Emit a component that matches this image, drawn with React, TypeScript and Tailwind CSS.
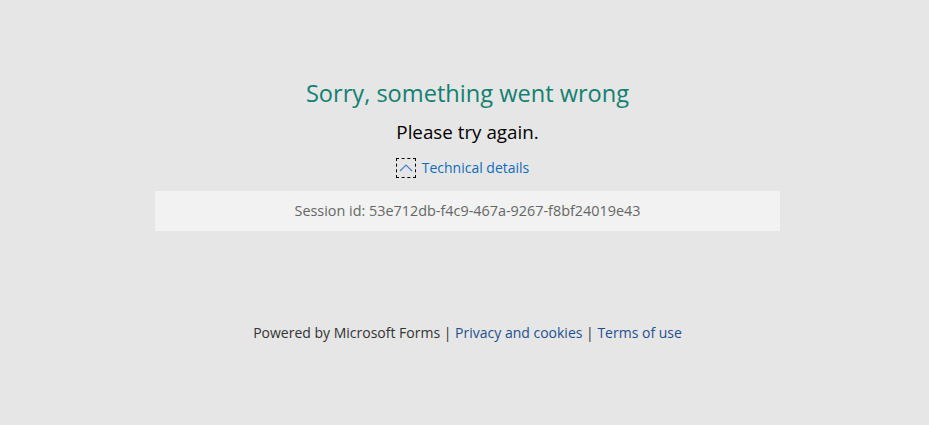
export default function App() {
  return (
    <div
      className="w-full h-[425px] bg-[#e6e6e6] pl-[6px] flex flex-col items-center"
      style={{ fontFamily: '"Segoe UI", "Open Sans", sans-serif' }}
    >
      <h1 className="mt-[76px] text-[23.6px] leading-[34px] text-[#138071] font-normal">
        Sorry, something went wrong
      </h1>
      <p className="mt-[10px] text-[18.8px] leading-[24px] text-black">Please try again.</p>
      <div className="mt-[14px] mr-[10px] flex items-center gap-[6px] h-[20px]">
        <span className="w-[20px] h-[20px] border border-dashed border-black flex items-center justify-center">
          <svg width="14" height="10" viewBox="0 0 14 10" fill="none">
            <path d="M1 8 L7 2 L13 8" stroke="#4a7fcf" strokeWidth="1.2" />
          </svg>
        </span>
        <span className="text-[14px] leading-[20px] text-[#0f6cbd]">Technical details</span>
      </div>
      <div className="mt-[13px] w-[625px] h-[40px] bg-[#f2f2f2] flex items-center justify-center text-[14.4px] text-[#666666]">
        Session id: 53e712db-f4c9-467a-9267-f8bf24019e43
      </div>
      <div className="mt-[92px] text-[14px] leading-[20px] text-[#333333]">
        Powered by Microsoft Forms |{" "}
        <a className="text-[#1f4f91]">Privacy and cookies</a> |{" "}
        <a className="text-[#1f4f91]">Terms of use</a>
      </div>
    </div>
  );
}
